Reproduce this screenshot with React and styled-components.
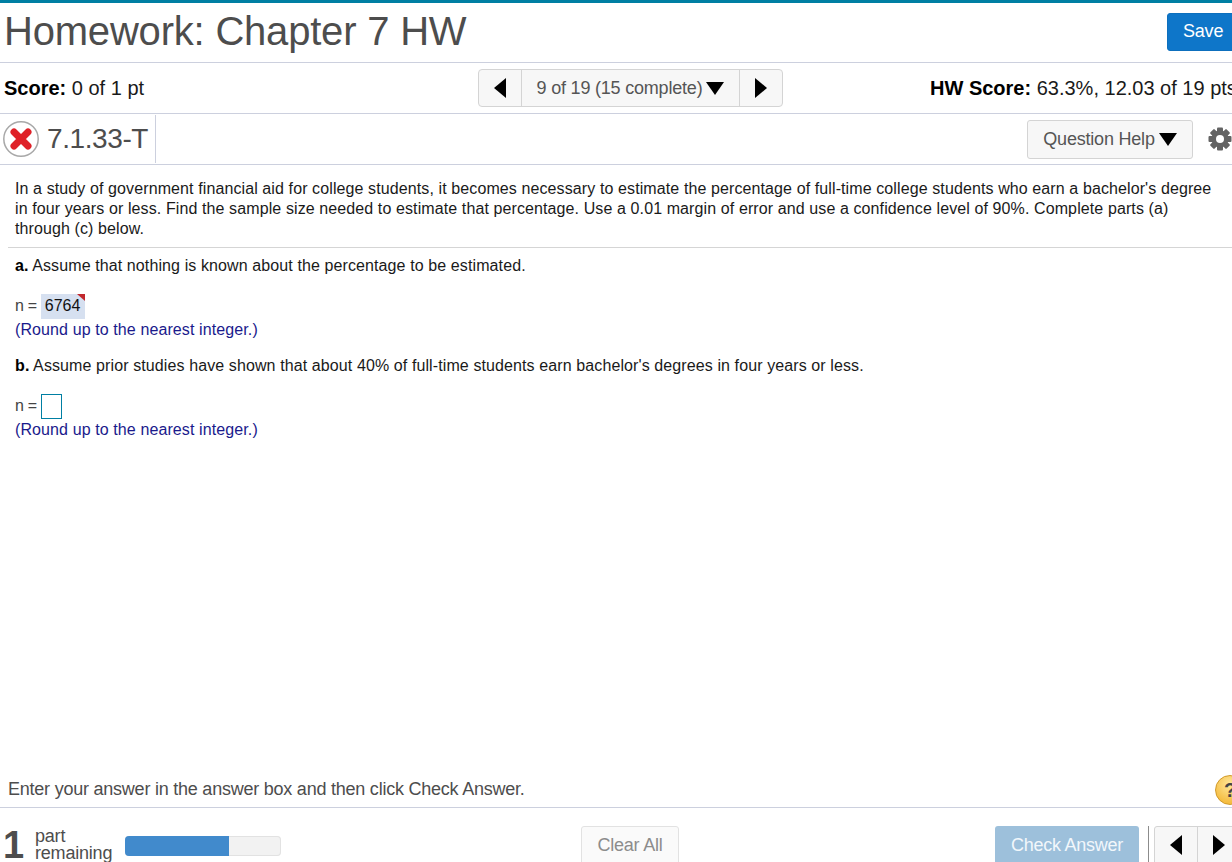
import styled, { createGlobalStyle } from 'styled-components';

const GlobalStyle = createGlobalStyle`
  html, body { margin: 0; padding: 0; background: #fff; overflow: hidden; }
  body { font-family: "Liberation Sans", Arial, sans-serif; }
`

const Page = styled.div`
  width: 1232px;
  height: 862px;
  overflow: hidden;
  display: flex;
  flex-direction: column;
  border-top: 3px solid #007fa3;
  box-sizing: border-box;
`

const TitleBar = styled.header`
  height: 59px;
  flex: none;
  display: flex;
  justify-content: space-between;
  border-bottom: 1px solid #ccd0de;
`

const Title = styled.h1`
  margin: 7px 0 0 4px;
  font-size: 40px;
  line-height: 42px;
  font-weight: 400;
  letter-spacing: -0.2px;
  color: #4d4d4d;
`

const SaveButton = styled.button`
  width: 73px;
  height: 38px;
  flex: none;
  margin: 10px -8px 0 0;
  padding: 0 0 2px 15px;
  text-align: left;
  background: #0e76c9;
  border: 1px solid #0d6fbd;
  border-radius: 3px;
  color: #fff;
  font: 18px "Liberation Sans", sans-serif;
  letter-spacing: -0.2px;
`

const ScoreRow = styled.div`
  height: 50px;
  flex: none;
  display: grid;
  grid-template-columns: 478px 305px 1fr;
  align-items: center;
  border-bottom: 1px solid #ccd0de;
  font-size: 20px;
  color: #1a1a1a;
  white-space: nowrap;
`

const ScoreText = styled.div`
  padding-left: ${({ $indent }) => $indent}px;
  b { color: #000; }
`

const NavGroup = styled.div`
  display: flex;
  height: 38px;
  border: 1px solid #d4d4d4;
  border-radius: 4px;
  background: #f7f7f7;
  box-sizing: border-box;
`

const NavCell = styled.div`
  width: ${({ $w }) => $w}px;
  flex: ${({ $w }) => ($w ? 'none' : 1)};
  display: flex;
  align-items: center;
  justify-content: center;
  gap: 4px;
  font-size: 18px;
  letter-spacing: -0.2px;
  color: #555;
  border-left: ${({ $first }) => ($first ? 'none' : '1px solid #d4d4d4')};
`

const Arrow = styled.svg`
  display: block;
  flex: none;
  width: ${({ $w }) => $w}px;
  height: ${({ $h }) => $h}px;
  fill: #000;
`

const QuestionRow = styled.div`
  height: 50px;
  flex: none;
  display: flex;
  align-items: center;
  border-bottom: 1px solid #ccd0de;
`

const QuestionId = styled.div`
  height: 48px;
  display: flex;
  align-items: center;
  gap: 8px;
  padding: 0 7px 0 3px;
  border-right: 1px solid #ccd0de;
  font-size: 28px;
  letter-spacing: -0.4px;
  color: #4d4d4d;
`

const HelpButton = styled.div`
  margin-left: auto;
  width: 166px;
  height: 39px;
  box-sizing: border-box;
  display: flex;
  align-items: center;
  justify-content: center;
  gap: 4px;
  border: 1px solid #d4d4d4;
  border-radius: 3px;
  background: #f7f7f7;
  font-size: 18px;
  letter-spacing: -0.2px;
  color: #555;
`

const GearWrap = styled.div`
  width: 39px;
  display: flex;
  justify-content: flex-end;
`

const Body = styled.main`
  flex: 1;
  min-height: 0;
  font-size: 16px;
  line-height: 20px;
  letter-spacing: 0.105px;
  color: #1a1a1a;
`

const Intro = styled.p`
  margin: 0 0 0 8px;
  padding: 14px 0 8px 7px;
  border-bottom: 1px solid #d5d5d5;
`

const Part = styled.p`
  margin: 0;
  padding: ${({ $top }) => $top}px 0 0 15px;
  height: ${({ $h }) => $h}px;
  box-sizing: border-box;
  b { color: #000; }
`

const AnswerLine = styled.div`
  height: 24px;
  padding-left: 15px;
  display: flex;
  align-items: center;
  letter-spacing: -0.3px;
  color: #444;
`

const Answered = styled.span`
  position: relative;
  height: 25px;
  margin-left: 4px;
  padding: 0 4px;
  width: 44px;
  box-sizing: border-box;
  display: flex;
  align-items: center;
  background: #d6e0f0;
  letter-spacing: 0;
  color: #111;
  &::after {
    content: '';
    position: absolute;
    top: 0;
    right: 0;
    border-top: 7px solid #c1272d;
    border-left: 8px solid transparent;
  }
`

const EmptyInput = styled.span`
  width: 21px;
  height: 25px;
  margin-left: 4px;
  box-sizing: border-box;
  border: 1px solid #007fa3;
`

const Hint = styled.div`
  padding-left: 15px;
  height: 20px;
  margin-top: 2px;
  color: #1a1a8c;
`

const Instruction = styled.div`
  height: 37px;
  flex: none;
  display: flex;
  justify-content: space-between;
  align-items: center;
  padding: 1px 0 0 8px;
  box-sizing: border-box;
  border-bottom: 1px solid #ccd0de;
  font-size: 18px;
  letter-spacing: -0.23px;
  color: #4d4d4d;
`

const HelpDot = styled.div`
  width: 30px;
  height: 30px;
  flex: none;
  margin: 1px -13px 0 0;
  border-radius: 50%;
  border: 1px solid #d19a2a;
  box-sizing: border-box;
  background: radial-gradient(circle at 50% 30%, #ffe79a, #f5bd42 75%);
  color: #444;
  font-size: 20px;
  font-weight: 700;
  line-height: 28px;
  padding-left: 8px;
`

const Footer = styled.footer`
  height: 54px;
  flex: none;
  display: flex;
  align-items: flex-start;
  & > * { flex: none; }
`

const PartsCount = styled.div`
  width: 35px;
  padding: 19px 0 0 3px;
  box-sizing: border-box;
  font-size: 38px;
  line-height: 36px;
  font-weight: 700;
  color: #4d4d4d;
`

const PartsLabel = styled.div`
  width: 90px;
  margin-top: 20px;
  font-size: 18px;
  line-height: 17px;
  letter-spacing: -0.2px;
  color: #4d4d4d;
`

const Progress = styled.div`
  width: 156px;
  height: 20px;
  margin-top: 28px;
  border-radius: 4px;
  background: #f2f2f2;
  box-shadow: inset 0 0 0 1px #e2e2e2;
  overflow: hidden;
`

const ProgressFill = styled.div`
  height: 100%;
  background: #418acc;
`

const ClearButton = styled.div`
  width: 98px;
  height: 50px;
  margin: 18px 0 0 300px;
  box-sizing: border-box;
  padding-top: 8px;
  text-align: center;
  border: 1px solid #e2e2e2;
  border-radius: 3px;
  background: #fafafa;
  font-size: 18px;
  letter-spacing: -0.2px;
  color: #8c8c8c;
`

const CheckButton = styled.div`
  width: 144px;
  height: 50px;
  margin: 18px 0 0 316px;
  box-sizing: border-box;
  padding-top: 9px;
  text-align: center;
  border-radius: 3px;
  background: #9dc0db;
  font-size: 18px;
  letter-spacing: -0.25px;
  color: #f2f7fb;
`

const Divider = styled.div`
  width: 1px;
  height: 40px;
  margin: 18px 0 0 9px;
  background: #8c8c8c;
`

const FooterNav = styled.div`
  width: 90px;
  height: 50px;
  margin: 18px 0 0 5px;
  box-sizing: border-box;
  display: flex;
  border: 1px solid #d4d4d4;
  border-radius: 3px;
  background: #f7f7f7;
`

const FooterNavCell = styled.div`
  width: 42px;
  height: 36px;
  flex: none;
  display: flex;
  align-items: center;
  justify-content: center;
  border-left: ${({ $first }) => ($first ? 'none' : '1px solid #d4d4d4')};
`

const TriLeft = () => (
  <Arrow $w={12} $h={20} viewBox="0 0 12 20"><path d="M12 0v20L0 10z" /></Arrow>
)
const TriRight = () => (
  <Arrow $w={12} $h={20} viewBox="0 0 12 20"><path d="M0 0v20l12-10z" /></Arrow>
)
const TriDown = () => (
  <Arrow $w={18} $h={13} viewBox="0 0 18 13"><path d="M0 0h18L9 13z" /></Arrow>
)

function WrongIcon() {
  return (
    <svg width="36" height="38" viewBox="0 0 36 38">
      <circle cx="18" cy="19" r="17.2" fill="#fff" stroke="#a8a8a8" strokeWidth="1.5" />
      <path d="M11 12 25 26M25 12 11 26" stroke="#df2027" strokeWidth="7" strokeLinecap="round" />
    </svg>
  )
}

function GearIcon() {
  const teeth = [0, 45, 90, 135];
  return (
    <svg width="24" height="24" viewBox="0 0 24 24">
      {teeth.map((a) => (
        <rect key={a} x="9" y="0.5" width="6" height="23" rx="1" fill="#636363" transform={`rotate(${a} 12 12)`} />
      ))}
      <circle cx="12" cy="12" r="8.5" fill="#636363" />
      <circle cx="12" cy="12" r="4" fill="#fff" />
    </svg>
  )
}

export default function App() {
  return (
    <>
      <GlobalStyle />
      <Page>
        <TitleBar>
          <Title>Homework: Chapter 7 HW</Title>
          <SaveButton>Save</SaveButton>
        </TitleBar>

        <ScoreRow>
          <ScoreText $indent={4}><b>Score:</b> 0 of 1 pt</ScoreText>
          <NavGroup>
            <NavCell $w={42} $first><TriLeft /></NavCell>
            <NavCell>9 of 19 (15 complete) <TriDown /></NavCell>
            <NavCell $w={42}><TriRight /></NavCell>
          </NavGroup>
          <ScoreText $indent={147}><b>HW Score:</b> 63.3%, 12.03 of 19 pts</ScoreText>
        </ScoreRow>

        <QuestionRow>
          <QuestionId><WrongIcon />7.1.33-T</QuestionId>
          <HelpButton>Question Help <TriDown /></HelpButton>
          <GearWrap><GearIcon /></GearWrap>
        </QuestionRow>

        <Body>
          <Intro>
            In a study of government financial aid for college students, it becomes necessary to estimate the percentage of full-time college students who earn a bachelor's degree
            <br />
            in four years or less. Find the sample size needed to estimate that percentage. Use a 0.01 margin of error and use a confidence level of 90%. Complete parts (a)
            <br />
            through (c) below.
          </Intro>
          <Part $top={8} $h={46}><b>a.</b> Assume that nothing is known about the percentage to be estimated.</Part>
          <AnswerLine>n = <Answered>6764</Answered></AnswerLine>
          <Hint>(Round up to the nearest integer.)</Hint>
          <Part $top={16} $h={54}><b>b.</b> Assume prior studies have shown that about 40% of full-time students earn bachelor's degrees in four years or less.</Part>
          <AnswerLine>n = <EmptyInput /></AnswerLine>
          <Hint>(Round up to the nearest integer.)</Hint>
        </Body>

        <Instruction>
          Enter your answer in the answer box and then click Check Answer.
          <HelpDot>?</HelpDot>
        </Instruction>

        <Footer>
          <PartsCount>1</PartsCount>
          <PartsLabel>part<br />remaining</PartsLabel>
          <Progress><ProgressFill style={{ width: `${(2 / 3) * 100}%` }} /></Progress>
          <ClearButton>Clear All</ClearButton>
          <CheckButton>Check Answer</CheckButton>
          <Divider />
          <FooterNav>
            <FooterNavCell $first><TriLeft /></FooterNavCell>
            <FooterNavCell><TriRight /></FooterNavCell>
          </FooterNav>
        </Footer>
      </Page>
    </>
  )
}
